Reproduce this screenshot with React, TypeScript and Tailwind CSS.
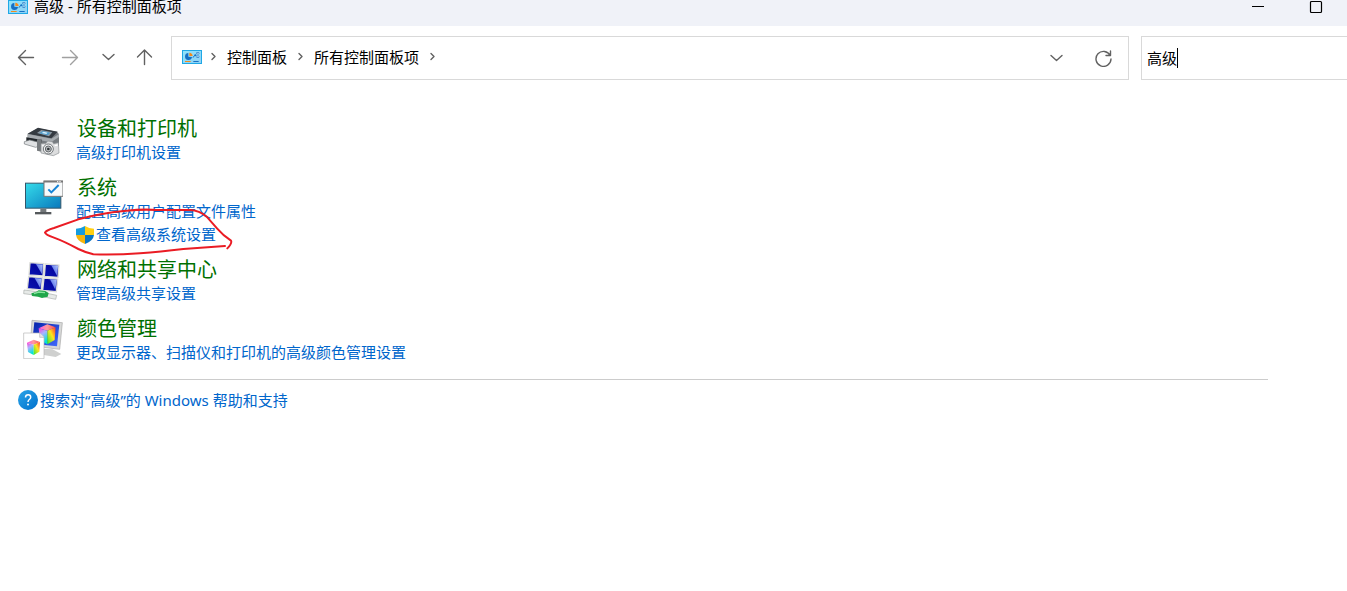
import { useId, useState } from "react";
import type { ReactNode } from "react";

function PanelIcon() {
  const id = useId();
  return (
    <svg viewBox="0 0 60 42" className="w-5 h-[14px] shrink-0" aria-hidden="true">
      <defs>
        <linearGradient id={id} x1="0" y1="0" x2="1" y2="1">
          <stop offset="0" stopColor="#8fe3fb" />
          <stop offset="1" stopColor="#8fd0f4" />
        </linearGradient>
      </defs>
      <rect x="1.500" y="1.500" width="57" height="39" fill={`url(#${id})`} stroke="#1fa8e6" strokeWidth="3" />
      <path d="M19 9 A10.500 10.500 0 1 0 30 21 L19 20 Z" fill="#1670c4" />
      <path d="M22 8 A11 11 0 0 1 32 18 L22 18 Z" fill="#f38b1c" />
      <path d="M33 23 L38 16 L43 16 M43 9 L51 9 M44 22 L51 22" stroke="#1670c4" strokeWidth="3" fill="none" />
      <circle cx="40" cy="16" r="3" fill="#1670c4" />
      <circle cx="48" cy="10" r="3" fill="#fff" stroke="#1670c4" strokeWidth="2" />
      <circle cx="48" cy="20" r="3" fill="#fff" stroke="#1670c4" strokeWidth="2" />
      <path d="M9 34.500 H26" stroke="#f38b1c" strokeWidth="3" />
      <path d="M34 34.500 H50" stroke="#1670c4" strokeWidth="3" />
    </svg>
  );
}

function PrinterIcon() {
  return (
    <svg viewBox="0 -4 120 120" className="w-10 h-10" aria-hidden="true">
      <path d="M14 40 L44 24 L102 34 L108 42 L108 76 L72 82 L14 62 Z" fill="#777c80" />
      <path d="M14 40 L45 22 L104 34 L85 54 Z" fill="#343a40" />
      <path d="M42 38 L55 29 L88 36 L78 48 Z" fill="#8e9ba5" />
      <path d="M49 39 L59 32 L82 37 L74 45 Z" fill="#4c9ccc" />
      <path d="M56 38 L62 34 L74 37 L70 41 Z" fill="#d7ecf7" />
      <path d="M14 41 L85 55 L108 41 L108 50 L84 66 L14 52 Z" fill="#a6abaf" />
      <path d="M10 51 L57 59 L57 75 L10 65 Z" fill="#22272b" />
      <path d="M4 64 L20 59 L52 67 L50 77 L38 81 L4 71 Z" fill="#dfe1e3" stroke="#73787b" strokeWidth="2" />
      <path d="M42 57 L56 55 L58 95 L42 91 Z" fill="#777b7e" />
      <path d="M54 70 L69 69 L74 62 L88 64 L92 70 L106 67 L108 98 L91 106 L54 98 Z" fill="#dcddde" stroke="#8d9194" strokeWidth="2" />
      <circle cx="76" cy="86" r="15" fill="#f3f3f3" stroke="#74797c" strokeWidth="3" />
      <circle cx="76" cy="86" r="9" fill="#b7babd" stroke="#606568" strokeWidth="3" />
      <circle cx="76" cy="86" r="4" fill="#303437" />
      <path d="M95 76 L104 74 M58 76 L62 76" stroke="#fff" strokeWidth="4" />
    </svg>
  );
}

function SystemIcon() {
  return (
    <svg viewBox="0 0 120 120" className="w-10 h-10" aria-hidden="true">
      <defs>
        <linearGradient id="screen" x1="0" y1="0" x2="1" y2="1">
          <stop offset="0" stopColor="#35dcea" />
          <stop offset="1" stopColor="#0878bd" />
        </linearGradient>
      </defs>
      <rect x="7.500" y="15.500" width="106" height="75" fill="url(#screen)" stroke="#33566a" strokeWidth="3" />
      <rect x="52" y="92" width="18" height="11" fill="#74787b" />
      <rect x="36" y="102" width="49" height="7" fill="#55595c" />
      <rect x="63" y="9" width="57" height="46" fill="#f8fafb" stroke="#777" strokeWidth="3" />
      <path d="M62 11 H120" stroke="#777" strokeWidth="5" />
      <path d="M102 11 h4 M109 11 h4" stroke="#fff" strokeWidth="3" />
      <path d="M76 34 L85 43 L107 21" fill="none" stroke="#1684d6" strokeWidth="6" />
    </svg>
  );
}

function NetworkIcon() {
  const tiles = ["M26 8 L67 11 L65 48 L23 45 Z", "M72 12 L113 15 L110 52 L69 49 Z", "M22 50 L63 53 L60 90 L18 86 Z", "M68 54 L109 57 L105 95 L64 91 Z"];
  const shines = ["M44 12 L64 14 L62 43 Z", "M90 16 L110 18 L107 47 Z", "M40 54 L60 56 L57 85 Z", "M86 58 L106 60 L102 89 Z"];
  return (
    <svg viewBox="5 0 120 120" className="w-10 h-10" aria-hidden="true">
      <defs>
        <linearGradient id="tile" x1="0" y1="1" x2="1" y2="0">
          <stop offset="0" stopColor="#0a14b4" />
          <stop offset="0.600" stopColor="#0508a0" />
          <stop offset="1" stopColor="#3f5be0" />
        </linearGradient>
        <linearGradient id="shine" x1="0" y1="1" x2="1" y2="0">
          <stop offset="0" stopColor="#2c45dc" />
          <stop offset="1" stopColor="#b4c9ff" />
        </linearGradient>
      </defs>
      {tiles.map((d) => (
        <path key={d} d={d} fill="url(#tile)" stroke="#dedfda" strokeWidth="4" />
      ))}
      {shines.map((d) => (
        <path key={d} d={d} fill="url(#shine)" />
      ))}
      <path d="M8 90 L48 95 L46 106 L7 101 Z M73 99 L106 106 L103 118 L69 111 Z" fill="#e7eae8" stroke="#a9afac" strokeWidth="2" />
      <path d="M30 100 L44 96 L52 91 L72 93 L82 99 L79 110 L62 114 L50 110 L32 108 Z" fill="#20a64a" />
      <path d="M38 101 L52 96 L71 98" fill="none" stroke="#86e29c" strokeWidth="4" />
    </svg>
  );
}

function RgbCube() {
  return (
    <>
      <path d="M0 9 L20 0 L39 7 L20 15 Z" fill="url(#cube-top)" />
      <path d="M0 9 L20 15 L20 46 L3 37 Z" fill="url(#cube-left)" />
      <path d="M20 15 L39 7 L37 36 L20 46 Z" fill="url(#cube-right)" />
    </>
  );
}

function ColorIcon() {
  return (
    <svg viewBox="3 0 120 120" className="w-10 h-10" aria-hidden="true">
      <defs>
        <linearGradient id="cube-top">
          <stop offset="0" stopColor="#ff55ea" />
          <stop offset="0.500" stopColor="#ff9a9a" />
          <stop offset="1" stopColor="#ff4b4b" />
        </linearGradient>
        <linearGradient id="cube-left" x1="0" y1="0" x2="0.400" y2="1">
          <stop offset="0" stopColor="#ff3bd3" />
          <stop offset="0.450" stopColor="#a9b4ff" />
          <stop offset="1" stopColor="#00e5d5" />
        </linearGradient>
        <linearGradient id="cube-right" x1="1" y1="0" x2="0" y2="1">
          <stop offset="0" stopColor="#ff3030" />
          <stop offset="0.450" stopColor="#ffe51f" />
          <stop offset="1" stopColor="#2ce833" />
        </linearGradient>
        <linearGradient id="monitor" x1="0" y1="0" x2="1" y2="1">
          <stop offset="0" stopColor="#0621a8" />
          <stop offset="1" stopColor="#426cff" />
        </linearGradient>
      </defs>
      <path d="M30 4 L121 11 L113 91 L25 80 Z" fill="#d8d9d8" stroke="#a7a8a7" strokeWidth="2" />
      <path d="M37 10 L112 17 L105 82 L30 74 Z" fill="url(#monitor)" />
      <path d="M60 89 L92 91 L118 105 L101 114 L61 107 Z" fill="#cfd0cf" />
      <g transform="translate(50 16) scale(1.300)"><RgbCube /></g>
      <path d="M5 42 H53 L66 55 V119 H5 Z" fill="#fff" stroke="#b5b5b5" strokeWidth="2" />
      <path d="M53 42 V55 H66" fill="#e8e8e8" stroke="#b5b5b5" strokeWidth="2" />
      <g transform="translate(15 62)"><RgbCube /></g>
    </svg>
  );
}

function ShieldIcon() {
  return (
    <svg viewBox="0 0 54 54" className="w-[18px] h-[18px] shrink-0" aria-hidden="true">
      <path d="M27 0 Q15 8 0 8 V27 H27 Z" fill="#159bdd" />
      <path d="M27 0 Q39 8 54 8 V27 H27 Z" fill="#ffcf12" />
      <path d="M0 27 Q3 46 27 54 V27 Z" fill="#f6b50b" />
      <path d="M54 27 Q51 46 27 54 V27 Z" fill="#0875c5" />
    </svg>
  );
}

function Stroke({ d, className = "" }: { d: string; className?: string }) {
  return (
    <svg viewBox="0 0 18 18" className={`w-[18px] h-[18px] shrink-0 ${className}`} fill="none" stroke="currentColor" strokeWidth="1.400" strokeLinecap="round" strokeLinejoin="round" aria-hidden="true">
      <path d={d} />
    </svg>
  );
}

const chevronDown = "M4 6.500 L9.500 11.500 L15 6.500";
const chevronRight = "M8 5.500 L11 8.500 L8 11.500";

type Task = { label: string; shield?: boolean };
type Group = { title: string; icon: ReactNode; tasks: Task[]; marked?: boolean };

const groups: Group[] = [
  { title: "设备和打印机", icon: <PrinterIcon />, tasks: [{ label: "高级打印机设置" }] },
  {
    title: "系统",
    icon: <SystemIcon />,
    tasks: [{ label: "配置高级用户配置文件属性" }, { label: "查看高级系统设置", shield: true }],
    marked: true,
  },
  { title: "网络和共享中心", icon: <NetworkIcon />, tasks: [{ label: "管理高级共享设置" }] },
  { title: "颜色管理", icon: <ColorIcon />, tasks: [{ label: "更改显示器、扫描仪和打印机的高级颜色管理设置" }] },
];

function RedCircle() {
  return (
    <svg viewBox="0 0 720 180" className="absolute left-3 top-6 w-60 h-[60px] pointer-events-none" fill="none" stroke="#ea1c24" strokeWidth="6" strokeLinecap="round" strokeLinejoin="round" aria-hidden="true">
      <path d="M585 138 L460 147 Q390 155 330 160 Q260 165 190 163 Q168 158 145 147 Q105 125 70 112 Q48 105 45 98 Q48 91 72 84 L145 58 Q215 38 290 32 Q340 27 380 30 L480 30 Q508 31 530 50 L561 85 Q578 105 603 122 Q607 130 592 145" />
    </svg>
  );
}

export default function App() {
  const [query, setQuery] = useState("高级");

  return (
    <div className="min-h-screen bg-white text-[15px] text-black overflow-x-hidden font-['Noto_Sans','Noto_Sans_CJK_SC',sans-serif]">
      <header className="h-[26px] bg-[#f0f2f8] flex items-start justify-between pl-2 pr-6">
        <div className="h-[14px] flex items-start gap-[6px]">
          <PanelIcon />
          <h1 className="leading-3 whitespace-nowrap">高级 - 所有控制面板项</h1>
        </div>
        <div className="h-[14px] flex items-center gap-[44px]">
          <button aria-label="最小化" className="w-[14px] h-[14px]">
            <svg viewBox="0 0 14 14" className="w-[14px] h-[14px]"><path d="M1 6.500 H13" stroke="#000" /></svg>
          </button>
          <button aria-label="最大化" className="w-[14px] h-[14px]">
            <svg viewBox="0 0 14 14" className="w-[14px] h-[14px]"><rect x="1.500" y="1.500" width="11" height="11" rx="1" fill="none" stroke="#000" strokeWidth="1.200" /></svg>
          </button>
        </div>
      </header>

      <div className="flex items-center pt-[10px]">
        <nav className="flex items-center w-[171px] shrink-0 pl-[17px] pb-[2px] text-[#616161]">
          <button aria-label="后退" className="mr-[26px]"><Stroke d="M16.500 9.500 H1.500 M8.500 2.500 L1.500 9.500 L8.500 16.500" /></button>
          <button aria-label="前进" className="mr-5 text-[#a0a0a0]"><Stroke d="M1.500 9.500 H16.500 M9.500 2.500 L16.500 9.500 L9.500 16.500" /></button>
          <button aria-label="最近浏览的位置" className="mr-[18px]"><Stroke d={chevronDown} /></button>
          <button aria-label="上移"><Stroke d="M9.500 16.500 V2 M2.500 9 L9.500 2 L16.500 9" /></button>
        </nav>
        <div className="flex-1 h-11 border border-[#d9d9d9] flex items-center justify-between pl-[10px] pr-4 text-[#616161]">
          <div className="flex items-center pb-[2px]">
            <PanelIcon />
            <Stroke d={chevronRight} className="ml-[2px] mr-[5px]" />
            <a href="#panel" className="text-black">控制面板</a>
            <Stroke d={chevronRight} className="ml-1 mr-[5px]" />
            <a href="#all" className="text-black">所有控制面板项</a>
            <Stroke d={chevronRight} className="ml-1" />
          </div>
          <div className="flex items-center gap-[29px]">
            <button aria-label="以前的位置"><Stroke d={chevronDown} /></button>
            <button aria-label="刷新"><Stroke d="M16.200 6.500 A7.500 7.500 0 1 0 17 10 M16.500 2 V6.500 H12" /></button>
          </div>
        </div>
        <div className="relative ml-3 w-[206px] shrink-0">
          <input
            type="text"
            aria-label="搜索控制面板"
            value={query}
            onChange={(e) => setQuery(e.target.value)}
            className="block w-full h-11 border border-r-0 border-[#d9d9d9] pl-[5px] pb-[2px] outline-none"
          />
          <span className="absolute left-9 top-3 w-px h-5 bg-black" />
        </div>
      </div>

      <main className="pl-[18px] pr-[79px] pt-[37px]">
        <ul className="flex flex-col gap-3">
          {groups.map((group) => (
            <li key={group.title} className="relative flex items-start gap-[13px] pl-[5px]">
              <div className="w-10 shrink-0 pt-[2px]">{group.icon}</div>
              <div>
                <h2 className="h-6 text-xl leading-6">
                  <a href="#group" className="text-[#007000] ml-px">{group.title}</a>
                </h2>
                {group.tasks.map((task) => (
                  <a key={task.label} href="#task" className="flex items-center gap-[2px] h-[23px] leading-[23px] text-[#0066cc]">
                    {task.shield && <ShieldIcon />}
                    {task.label}
                  </a>
                ))}
              </div>
              {group.marked && <RedCircle />}
            </li>
          ))}
        </ul>
        <hr className="mt-[15px] border-[#cccccc]" />
        <a href="#help" className="mt-2 inline-flex items-center gap-[2px] h-6 text-[#0066cc]">
          <svg viewBox="0 0 20 20" className="w-5 h-5 shrink-0" aria-hidden="true">
            <defs>
              <linearGradient id="help" x1="0" y1="0" x2="1" y2="1">
                <stop offset="0" stopColor="#2aa4e8" />
                <stop offset="1" stopColor="#0070cc" />
              </linearGradient>
            </defs>
            <circle cx="10" cy="10" r="10" fill="url(#help)" />
            <path d="M7.500 7.500 Q7.500 4.800 10.200 4.800 Q12.700 4.800 12.700 7.200 Q12.700 8.500 11.300 9.500 Q10 10.500 10 12" fill="none" stroke="#fff" strokeWidth="1.500" />
            <circle cx="10" cy="14.500" r="1" fill="#fff" />
          </svg>
          <span>搜索对“高级”的 Windows 帮助和支持</span>
        </a>
      </main>
    </div>
  );
}
